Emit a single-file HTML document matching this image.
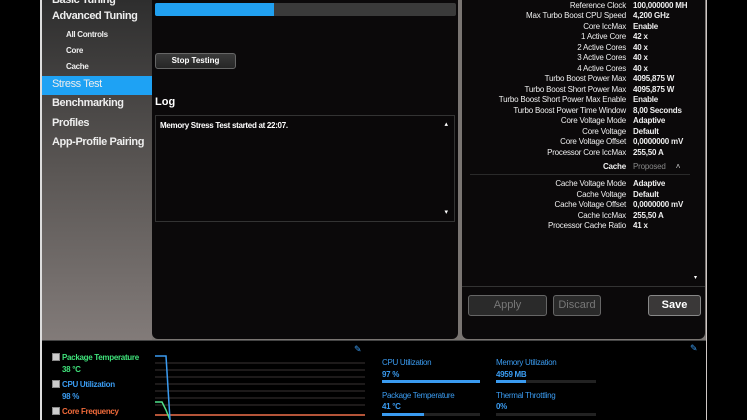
<!DOCTYPE html>
<html><head><meta charset="utf-8"><style>
*{margin:0;padding:0;box-sizing:border-box}
body{width:747px;height:420px;background:#000;overflow:hidden;position:relative;font-family:"Liberation Sans",sans-serif;color:#fff}
.abs{position:absolute}
#frame{left:40px;top:0;width:667px;height:420px;border-left:2px solid #ddd;border-right:2px solid #cfc8c6;background:#000}
#side{left:42px;top:0;width:110px;height:340px;background:linear-gradient(#2e2e2e,#5a5654 50%,#827b79)}
.nav{position:absolute;left:10px;font-size:11px;font-weight:bold;letter-spacing:-.4px;color:#eee}
.sub{position:absolute;left:24px;font-size:8px;font-weight:bold;letter-spacing:-.3px;color:#eee}
#gap{left:152px;top:0;width:554px;height:340px;background:#7a7572}
#main{left:152px;top:0;width:306px;height:339px;background:#0b090a;border-radius:0 0 6px 6px}
#right{left:462px;top:0;width:243px;height:339px;background:#0b090a;border-radius:0 0 6px 6px}
.lbl{position:absolute;right:121px;font-size:8px;color:#eee;white-space:nowrap;letter-spacing:-.2px}
.val{position:absolute;left:633px;font-size:8px;font-weight:bold;color:#eee;white-space:nowrap;letter-spacing:-.2px}
.btn{position:absolute;height:21px;border:1px solid #666;border-radius:3px;background:linear-gradient(#3a3a3a,#262626);font-size:11px;text-align:center;line-height:19px}
#bottom{left:42px;top:340px;width:664px;height:80px;background:#000;border-top:1px solid #444}
.g{color:#3fe27a;font-size:8px;font-weight:bold;letter-spacing:-.3px}
.b{color:#3a9bf0;font-size:8px;font-weight:bold;letter-spacing:-.3px}
.cb{display:inline-block;width:8px;height:8px;background:#ccc;border:1px solid #888;margin-right:2px;vertical-align:-1px}
</style></head><body>
<div class="abs" id="frame"></div>
<div class="abs" id="side">
<div class="nav" style="top:-6px">Basic Tuning</div>
<div class="nav" style="top:10px">Advanced Tuning</div>
<div class="sub" style="top:30px">All Controls</div>
<div class="sub" style="top:46px">Core</div>
<div class="sub" style="top:62px">Cache</div>
<div style="position:absolute;left:0;top:76px;width:110px;height:19px;background:#1ea2f4"></div>
<div class="nav" style="top:78px;font-weight:normal">Stress Test</div>
<div class="nav" style="top:97px">Benchmarking</div>
<div class="nav" style="top:117px">Profiles</div>
<div class="nav" style="top:136px">App-Profile Pairing</div>
</div>
<div class="abs" id="gap"></div>
<div class="abs" id="main">
<div class="abs" style="left:3px;top:3px;width:301px;height:13px;background:#3a3a3a;border-radius:2px"></div>
<div class="abs" style="left:3px;top:3px;width:119px;height:13px;background:#21a0f0;border-radius:2px 0 0 2px"></div>
<div class="btn" style="left:3px;top:53px;width:81px;height:16px;line-height:14px;font-size:8px;font-weight:bold">Stop Testing</div>
<div class="abs" style="left:3px;top:96px;font-size:11px;font-weight:bold">Log</div>
<div class="abs" style="left:3px;top:115px;width:300px;height:107px;border:1px solid #333;background:#0a0809">
<div style="position:absolute;left:4px;top:5px;font-size:8px;font-weight:bold;letter-spacing:-.3px">Memory Stress Test started at 22:07.</div>
<div style="position:absolute;right:6px;top:4px;font-size:7px">▴</div>
<div style="position:absolute;right:6px;bottom:5px;font-size:7px">▾</div>
</div>
</div>
<div class="abs" id="right">
<div class="abs" style="left:8px;top:174px;width:220px;height:1px;background:#2a2a2a"></div>
<div class="abs" style="left:0;top:286px;width:243px;height:1px;background:#333"></div>
<div class="abs" style="right:8px;top:274px;font-size:6px">▾</div>
<div class="btn" style="left:6px;top:295px;width:79px;color:#777;background:#2a2a2a">Apply</div>
<div class="btn" style="left:91px;top:295px;width:48px;color:#777;background:#2a2a2a">Discard</div>
<div class="btn" style="left:186px;top:295px;width:53px;font-weight:bold;background:#3a3838;border-color:#888">Save</div>
</div>
<div class="lbl" style="top:1px">Reference Clock</div><div class="val" style="top:1px">100,000000 MH</div>
<div class="lbl" style="top:11px">Max Turbo Boost CPU Speed</div><div class="val" style="top:11px">4,200 GHz</div>
<div class="lbl" style="top:22px">Core IccMax</div><div class="val" style="top:22px">Enable</div>
<div class="lbl" style="top:32px">1 Active Core</div><div class="val" style="top:32px">42 x</div>
<div class="lbl" style="top:43px">2 Active Cores</div><div class="val" style="top:43px">40 x</div>
<div class="lbl" style="top:53px">3 Active Cores</div><div class="val" style="top:53px">40 x</div>
<div class="lbl" style="top:64px">4 Active Cores</div><div class="val" style="top:64px">40 x</div>
<div class="lbl" style="top:74px">Turbo Boost Power Max</div><div class="val" style="top:74px">4095,875 W</div>
<div class="lbl" style="top:85px">Turbo Boost Short Power Max</div><div class="val" style="top:85px">4095,875 W</div>
<div class="lbl" style="top:95px">Turbo Boost Short Power Max Enable</div><div class="val" style="top:95px">Enable</div>
<div class="lbl" style="top:106px">Turbo Boost Power Time Window</div><div class="val" style="top:106px">8,00 Seconds</div>
<div class="lbl" style="top:116px">Core Voltage Mode</div><div class="val" style="top:116px">Adaptive</div>
<div class="lbl" style="top:127px">Core Voltage</div><div class="val" style="top:127px">Default</div>
<div class="lbl" style="top:137px">Core Voltage Offset</div><div class="val" style="top:137px">0,0000000 mV</div>
<div class="lbl" style="top:148px">Processor Core IccMax</div><div class="val" style="top:148px">255,50 A</div>
<div class="lbl" style="top:162px;font-weight:bold">Cache</div><div class="val" style="top:162px;font-weight:normal;color:#888">Proposed &nbsp;&nbsp;&nbsp;&nbsp;<span style="color:#ccc">˄</span></div>
<div class="lbl" style="top:179px">Cache Voltage Mode</div><div class="val" style="top:179px">Adaptive</div>
<div class="lbl" style="top:190px">Cache Voltage</div><div class="val" style="top:190px">Default</div>
<div class="lbl" style="top:200px">Cache Voltage Offset</div><div class="val" style="top:200px">0,0000000 mV</div>
<div class="lbl" style="top:211px">Cache IccMax</div><div class="val" style="top:211px">255,50 A</div>
<div class="lbl" style="top:221px">Processor Cache Ratio</div><div class="val" style="top:221px">41 x</div>
<div class="abs" id="bottom"></div>
<div class="abs g" style="left:52px;top:353px"><span class="cb"></span>Package Temperature</div>
<div class="abs g" style="left:62px;top:365px">38 °C</div>
<div class="abs b" style="left:52px;top:380px"><span class="cb"></span>CPU Utilization</div>
<div class="abs b" style="left:62px;top:392px">98 %</div>
<div class="abs" style="left:52px;top:407px;color:#f06a3a;font-size:8px;font-weight:bold;letter-spacing:-.3px"><span class="cb"></span>Core Frequency</div>
<svg class="abs" style="left:150px;top:340px" width="230" height="80">
<g stroke="#3a3434" stroke-width="1">
<line x1="5" y1="23" x2="215" y2="23"/><line x1="5" y1="30" x2="215" y2="30"/><line x1="5" y1="37" x2="215" y2="37"/><line x1="5" y1="44" x2="215" y2="44"/><line x1="5" y1="51" x2="215" y2="51"/><line x1="5" y1="58" x2="215" y2="58"/><line x1="5" y1="65" x2="215" y2="65"/></g>
<polyline fill="none" stroke="#f0704a" stroke-width="1.5" points="5,75 215,75"/>
<polyline fill="none" stroke="#4fe08a" stroke-width="1.5" points="5,62 12,62 16,70 20,80 M143,80 148,67 157,62 165,63 170,74 175,63 183,62 190,63 193,73 198,62 210,61 215,73"/>
<polyline fill="none" stroke="#3a9bf0" stroke-width="1.5" points="5,16 16,16 20,80 M143,80 144,17 165,17 170,18 175,16 190,17 193,19 196,16 215,17"/>
<text x="204" y="12" fill="#3a9bf0" font-size="9">✎</text>
</svg>
<div class="abs b" style="left:382px;top:358px;font-weight:normal">CPU Utilization</div>
<div class="abs b" style="left:382px;top:370px">97 %</div>
<div class="abs" style="left:382px;top:380px;width:98px;height:3px;background:#3a9bf0"></div>
<div class="abs b" style="left:382px;top:391px;font-weight:normal">Package Temperature</div>
<div class="abs b" style="left:382px;top:402px">41 °C</div>
<div class="abs" style="left:382px;top:413px;width:98px;height:3px;background:#222"></div>
<div class="abs" style="left:382px;top:413px;width:42px;height:3px;background:#3a9bf0"></div>
<div class="abs b" style="left:496px;top:358px;font-weight:normal">Memory Utilization</div>
<div class="abs b" style="left:496px;top:370px">4959 MB</div>
<div class="abs" style="left:496px;top:380px;width:100px;height:3px;background:#222"></div>
<div class="abs" style="left:496px;top:380px;width:30px;height:3px;background:#3a9bf0"></div>
<div class="abs b" style="left:496px;top:391px;font-weight:normal">Thermal Throttling</div>
<div class="abs b" style="left:496px;top:402px">0%</div>
<div class="abs" style="left:496px;top:413px;width:100px;height:3px;background:#222"></div>
<div class="abs" style="left:690px;top:343px;color:#3a9bf0;font-size:9px">✎</div>
</body></html>
